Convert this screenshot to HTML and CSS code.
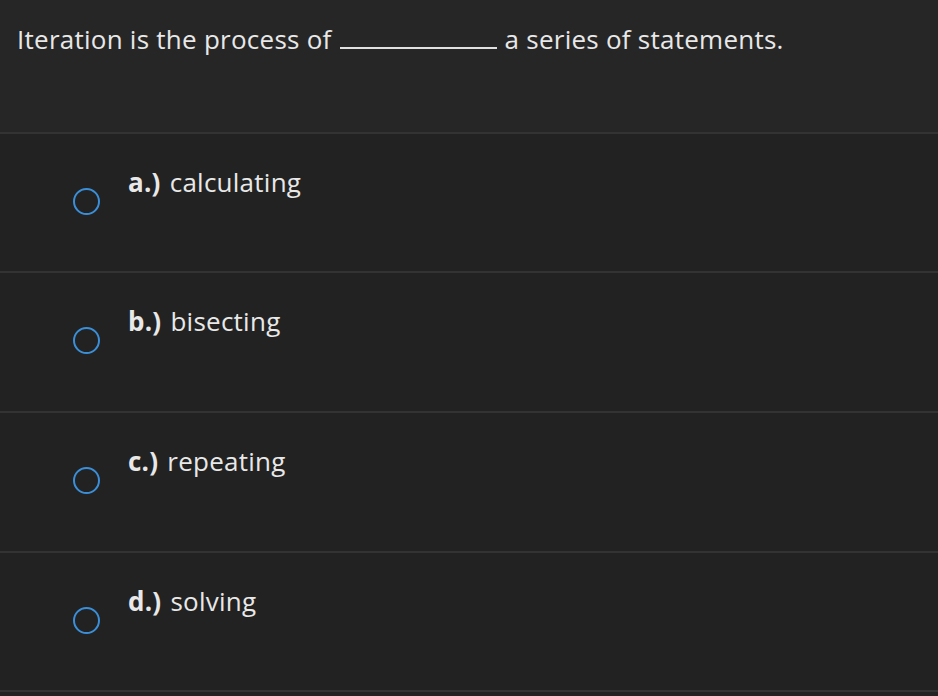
FILE: index.html
```html
<!DOCTYPE html>
<html>
<head>
<meta charset="utf-8">
<link rel="stylesheet" href="styles.css">
</head>
<body>
<div class="question">
  <p class="stem">Iteration is the process of <span class="blank"></span> a series of statements.</p>
</div>
<ul class="options">
  <li class="option"><span class="radio"></span><span class="label"><b>a.)</b> calculating</span></li>
  <li class="option"><span class="radio"></span><span class="label"><b>b.)</b> bisecting</span></li>
  <li class="option"><span class="radio"></span><span class="label"><b>c.)</b> repeating</span></li>
  <li class="option"><span class="radio"></span><span class="label"><b>d.)</b> solving</span></li>
</ul>
</body>
</html>
```
FILE: styles.css
```css
html, body {
  margin: 0;
  padding: 0;
  background: #222222;
}
body {
  font-family: "Open Sans", "Lato", sans-serif;
  color: #e8e8e8;
  width: 938px;
  height: 696px;
  overflow: hidden;
}
.question {
  background: #262626;
  height: 132px;
  border-bottom: 2px solid #333333;
  box-sizing: content-box;
}
.stem {
  margin: 0;
  padding: 22px 0 0 17px;
  font-size: 26px;
  line-height: 34px;
  letter-spacing: 0.25px;
}
.blank {
  display: inline-block;
  width: 157px;
  border-bottom: 2px solid #e0e0e0;
  vertical-align: baseline;
  margin: 0 1px;
}
.options {
  list-style: none;
  margin: 0;
  padding: 0;
}
.option {
  display: flex;
  align-items: flex-start;
  height: 137px;
  border-bottom: 2px solid #333333;
  padding-left: 73px;
}
.option:nth-child(2), .option:nth-child(3) {
  height: 138px;
}
.radio {
  flex: none;
  width: 23px;
  height: 23px;
  border: 2px solid #3a8fd8;
  border-radius: 50%;
  margin-top: 54px;
}
.label {
  margin-left: 28px;
  margin-top: 31px;
  font-size: 26px;
  line-height: 34px;
  letter-spacing: 0.25px;
}
.label b {
  font-weight: 700;
  margin-right: 2px;
}
```
